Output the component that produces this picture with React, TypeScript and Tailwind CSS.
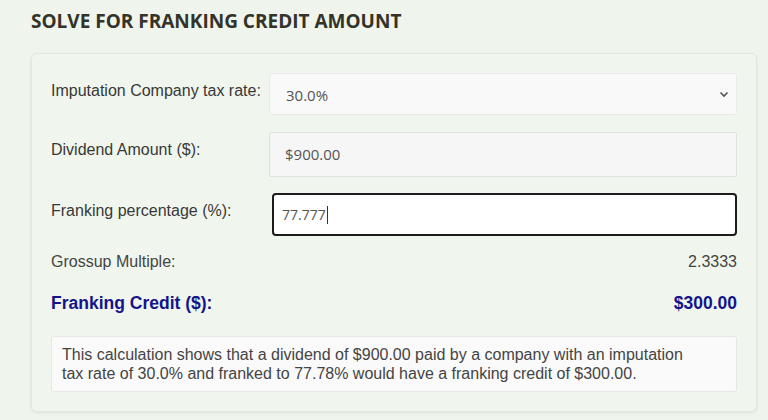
import React from 'react'

const Row = ({ label, children }: { label: string; children: React.ReactNode }) => (
  <div className="flex items-start">
    <label className="w-[218px] shrink-0 pt-[8px] text-[16px] leading-[19px] text-[#383838]">{label}</label>
    <div className="flex-1">{children}</div>
  </div>
)

export default function App() {
  return (
    <div className="min-h-[420px] w-[768px] bg-[#eff5ec] pl-[31px] pr-[11px] pt-[9px] font-['Liberation_Sans',Arial,sans-serif]">
      <h2 className="font-['Open_Sans',sans-serif] text-[19px] font-bold leading-[25px] text-[#333329]">
        SOLVE FOR FRANKING CREDIT AMOUNT
      </h2>

      <div className="mt-[19px] rounded-[6px] border border-[#e1e8dd] bg-[#f0f6ed] px-[19px] pb-[19px] pt-[19px] shadow-[0_1px_3px_rgba(0,0,0,0.08)]">
        <div className="flex flex-col gap-[17px]">
          <Row label="Imputation Company tax rate:">
            <div className="relative h-[42px] rounded-[3px] border border-[#eaeaea] bg-[#f9f9f9]">
              <span className="absolute left-[16px] top-[10px] font-['Open_Sans',sans-serif] text-[15px] text-[#555]">30.0%</span>
              <svg className="absolute right-[7px] top-[17px]" width="10" height="7" viewBox="0 0 10 7">
                <path d="M1.5 1.5 L5 5 L8.5 1.5" fill="none" stroke="#555" strokeWidth="1.6" />
              </svg>
            </div>
          </Row>
          <Row label="Dividend Amount ($):">
            <div className="flex h-[45px] items-center rounded-[2px] border border-[#e0e0e0] bg-[#f6f6f6] pl-[15px] font-['Open_Sans',sans-serif] text-[15px] text-[#555]">
              $900.00
            </div>
          </Row>
          <div className="-mt-[1px]">
            <Row label="Franking percentage (%):">
              <div className="ml-[3px] flex h-[43px] items-center rounded-[4px] border-2 border-[#1c1c1c] bg-white pl-[8px] font-['Open_Sans',sans-serif] text-[14px] text-[#555]">
                77.777<span className="ml-[1px] inline-block h-[18px] w-px bg-[#333]" />
              </div>
            </Row>
          </div>
        </div>

        <div className="mt-[17px] flex items-center justify-between text-[16px] leading-[18px] text-[#444]">
          <span>Grossup Multiple:</span>
          <span>2.3333</span>
        </div>

        <div className="mt-[22px] flex items-center justify-between text-[17.5px] font-bold leading-[20px] text-[#14148a]">
          <span>Franking Credit ($):</span>
          <span>$300.00</span>
        </div>

        <div className="mt-[23px] rounded-[3px] border border-[#e6e6e6] bg-[#fafafa] py-[8px] pl-[10px] pr-[30px] text-[16px] leading-[19px] text-[#444]">
          This calculation shows that a dividend of $900.00 paid by a company with an imputation tax rate of 30.0% and franked to 77.78% would have a franking credit of $300.00.
        </div>
      </div>
    </div>
  )
}
